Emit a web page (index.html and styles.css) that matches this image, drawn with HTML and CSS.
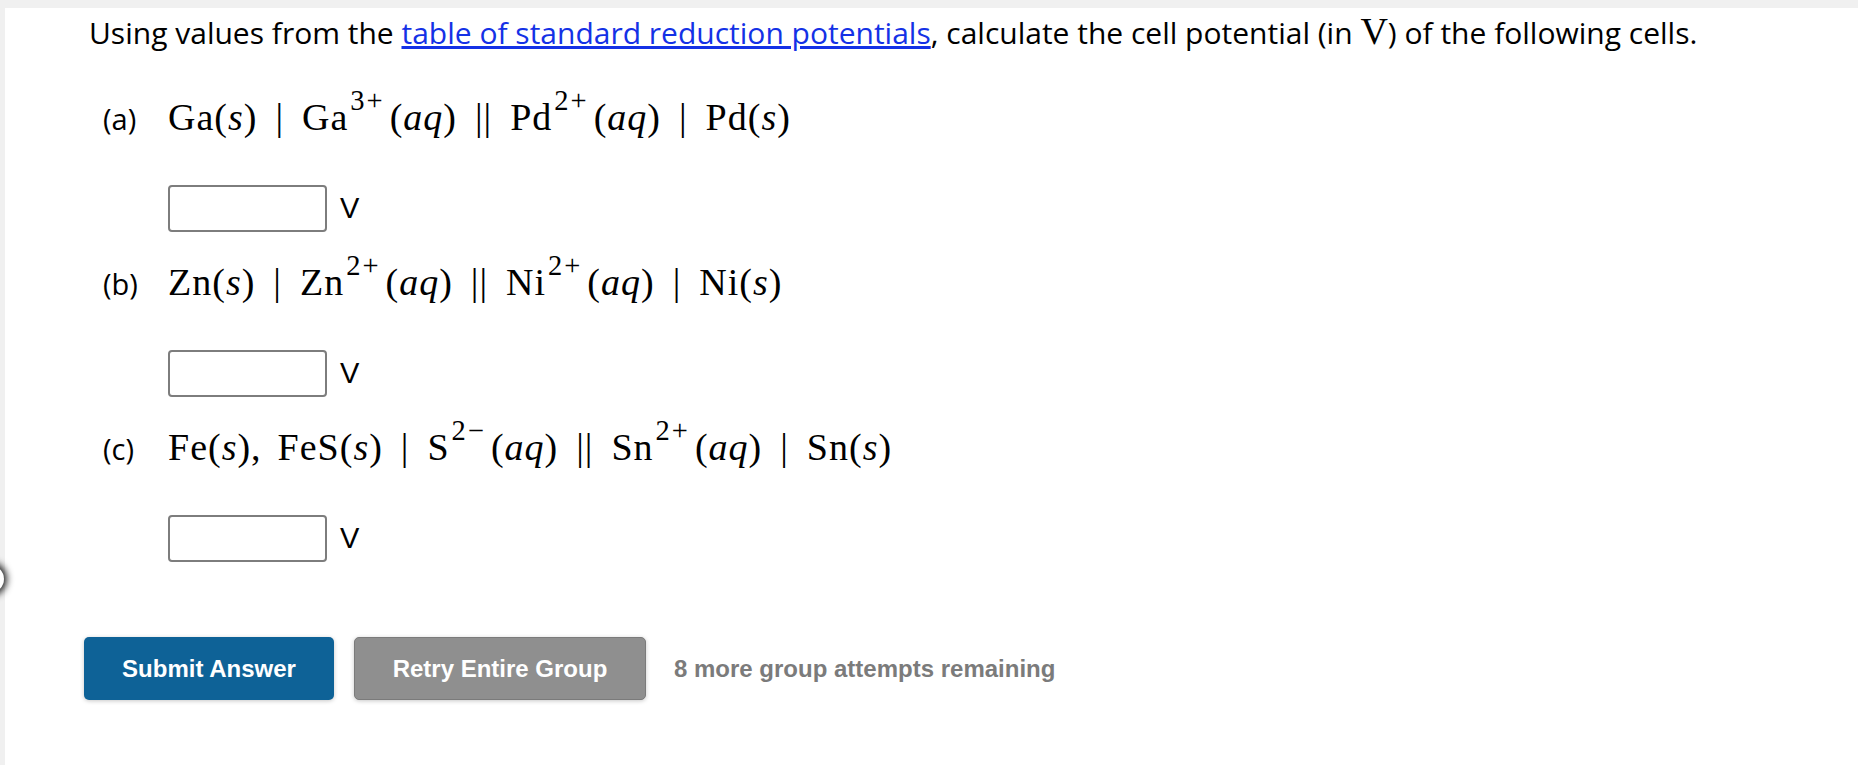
FILE: index.html
```html
<!DOCTYPE html>
<html>
<head>
  <link rel="stylesheet" href="styles.css">
</head>

<body>
  <div class="panel">
    <p class="prompt">Using values from the <a href="#">table of standard reduction potentials</a>, calculate the cell potential (in <span class="tex">V</span>) of the following cells.</p>

    <div class="part first">
      <div class="cell"><span class="label">(a)</span><span class="math">Ga(<i>s</i>)<span class="rel">|</span>Ga<sup>3+</sup>(<i>aq</i>)<span class="rel">||</span>Pd<sup>2+</sup>(<i>aq</i>)<span class="rel">|</span>Pd(<i>s</i>)</span></div>
      <div class="answer"><input type="text"><span class="unit">V</span></div>
    </div>

    <div class="part">
      <div class="cell"><span class="label">(b)</span><span class="math">Zn(<i>s</i>)<span class="rel">|</span>Zn<sup>2+</sup>(<i>aq</i>)<span class="rel">||</span>Ni<sup>2+</sup>(<i>aq</i>)<span class="rel">|</span>Ni(<i>s</i>)</span></div>
      <div class="answer"><input type="text"><span class="unit">V</span></div>
    </div>

    <div class="part">
      <div class="cell"><span class="label">(c)</span><span class="math">Fe(<i>s</i>),<span class="sp"></span>FeS(<i>s</i>)<span class="rel">|</span>S<sup>2&minus;</sup>(<i>aq</i>)<span class="rel">||</span>Sn<sup>2+</sup>(<i>aq</i>)<span class="rel">|</span>Sn(<i>s</i>)</span></div>
      <div class="answer"><input type="text"><span class="unit">V</span></div>
    </div>

    <div class="actions">
      <button class="submit">Submit Answer</button>
      <button class="retry">Retry Entire Group</button>
      <span class="attempts">8 more group attempts remaining</span>
    </div>
  </div>

  <div class="edge-dot"></div>
</body>
</html>
```

FILE: styles.css
```css
body {
  margin: 0;
  background-color: #f0f0f0;
  font-family: "Open Sans", sans-serif;
  color: #000;
}

.panel {
  margin: 8px 0 0 5px;
  min-height: calc(100vh - 8px);
  box-sizing: border-box;
  background-color: #fff;
  padding: 4px 0 0 79px;
}

.prompt {
  margin: 0 0 0 5px;
  font-size: 30px;
  line-height: 42px;
}

.prompt a {
  color: #1431e6;
}

.prompt .tex {
  font-family: "Liberation Serif", serif;
  font-size: 38px;
  line-height: 0;
}

.cell {
  display: flex;
  align-items: baseline;
  margin: 26px 0 0 19px;
}

.part.first .cell {
  margin-top: 39px;
}

.label {
  width: 65px;
  font-size: 29px;
  line-height: 48px;
}

.math {
  font-family: "Liberation Serif", serif;
  font-size: 38px;
  line-height: 48px;
  letter-spacing: 1px;
  white-space: nowrap;
}

.math .rel {
  margin: 0 18px;
}

.math .sp {
  display: inline-block;
  width: 16px;
}

.math sup {
  font-size: 0.75em;
  line-height: 0;
  vertical-align: 20px;
  letter-spacing: 2px;
  margin: 0 5px 0 2px;
}

.answer {
  display: flex;
  align-items: center;
  margin: 42px 0 0 84px;
}

.answer input {
  width: 159px;
  height: 47px;
  box-sizing: border-box;
  margin: 0;
  padding: 0 8px;
  border: 2px solid #7d7d7d;
  border-radius: 4px;
  font-size: 24px;
}

.unit {
  margin-left: 13px;
  font-family: "Liberation Sans", sans-serif;
  font-size: 29px;
}

.actions {
  display: flex;
  align-items: center;
  gap: 20px;
  margin-top: 75px;
}

.actions button {
  height: 63px;
  box-sizing: border-box;
  padding: 0;
  border: 0;
  border-radius: 5px;
  font: bold 24px "Liberation Sans", Arial, sans-serif;
  color: #fff;
  box-shadow: 0 1px 4px rgba(0, 0, 0, 0.22);
}

.actions .submit {
  width: 250px;
  background-color: #0e6297;
}

.actions .retry {
  width: 292px;
  background-color: #8f8f8f;
  border: 1px solid #7b7b7b;
}

.attempts {
  margin-left: 8px;
  font: bold 24px "Liberation Sans", Arial, sans-serif;
  color: #7b7b7b;
}

/* half hidden round thing poking in at the left edge */
.edge-dot {
  position: absolute;
  left: -24px;
  top: 565px;
  width: 28px;
  height: 28px;
  border-radius: 50%;
  background-color: #fff;
  box-shadow: 0 0 7px 3px rgba(0, 0, 0, 0.85);
}
```
